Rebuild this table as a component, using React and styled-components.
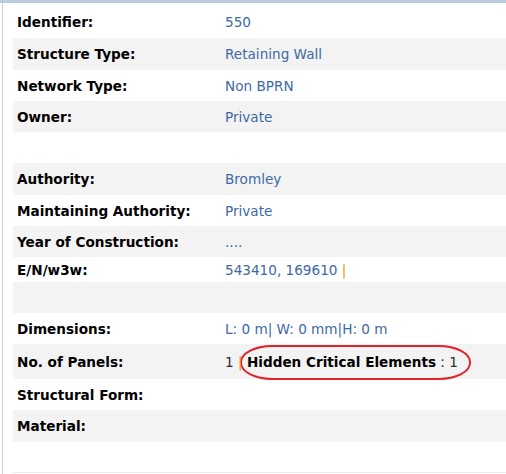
import React from "react";
import styled, { createGlobalStyle } from "styled-components";

const GlobalStyle = createGlobalStyle`
  html, body {
    margin: 0;
    padding: 0;
    background: #ffffff;
    font-family: "DejaVu Sans", Verdana, sans-serif;
    font-size: 13.6px;
  }
`;

const Page = styled.div`
  border-top: 3px solid #bacce0;
  width: 506px;
  height: 471px;
  overflow: hidden;
`;

const Panel = styled.div`
  margin-left: 2px;
  border-left: 1px solid #c3d2e4;
  padding: 3px 0 0 10px;
  height: 100%;
  box-sizing: border-box;
`;

const Table = styled.div`
  display: flex;
  flex-direction: column;
  border-bottom: 1px solid #ededed;
`;

const Row = styled.div`
  display: flex;
  align-items: center;
  height: ${({ $h }) => $h || 31}px;
  background: ${({ $shade }) => ($shade ? "#f3f3f3" : "#ffffff")};
`;

const Label = styled.div`
  width: 208px;
  padding-left: 4px;
  font-weight: bold;
  color: #000;
`;

const Value = styled.div`
  color: #3d6aa3;
  white-space: nowrap;
`;

const Pipe = styled.span`
  position: relative;
  z-index: 1;
  color: #e39426;
`;

const Plain = styled.span`
  color: #2a2a2a;
`;

const Circled = styled.span`
  position: relative;
  display: inline-block;
  line-height: 16px;
  color: #2a2a2a;

  &::after {
    content: "";
    position: absolute;
    left: -7px;
    right: -13px;
    top: -9px;
    bottom: -10px;
    border: 2px solid #e1232c;
    border-radius: 32px / 17px;
  }
`;

const Strong = styled.b`
  color: #000;
`;

const rows = [
  { label: "Identifier:", value: "550", h: 32 },
  { label: "Structure Type:", value: "Retaining Wall", h: 32 },
  { label: "Network Type:", value: "Non BPRN" },
  { label: "Owner:", value: "Private" },
  { blank: true },
  { label: "Authority:", value: "Bromley", h: 32 },
  { label: "Maintaining Authority:", value: "Private" },
  { label: "Year of Construction:", value: "...." },
  {
    label: "E/N/w3w:",
    h: 25,
    value: (
      <>
        543410, 169610 <Pipe>|</Pipe>
      </>
    ),
  },
  { blank: true },
  { label: "Dimensions:", value: "L: 0 m| W: 0 mm|H: 0 m" },
  {
    label: "No. of Panels:",
    h: 35,
    value: (
      <>
        <Plain>1 </Plain>
        <Pipe>|</Pipe>{" "}
        <Circled>
          <Strong>Hidden Critical Elements</Strong> : 1
        </Circled>
      </>
    ),
  },
  { label: "Structural Form:", value: "" },
  { label: "Material:", value: "", h: 32 },
  { blank: true, h: 30 },
];

export default function App() {
  return (
    <>
      <GlobalStyle />
      <Page>
        <Panel>
          <Table>
            {rows.map((r, i) => (
              <Row key={i} $shade={i % 2 === 1} $h={r.h}>
                {!r.blank && (
                  <>
                    <Label>{r.label}</Label>
                    <Value>{r.value}</Value>
                  </>
                )}
              </Row>
            ))}
          </Table>
        </Panel>
      </Page>
    </>
  );
}
